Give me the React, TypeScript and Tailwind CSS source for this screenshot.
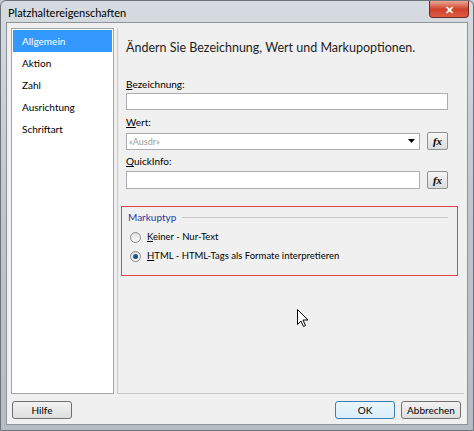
import React from "react";

const ui = { fontFamily: 'Lato, "Noto Sans", Arial, sans-serif' };

const FxButton = () => (
  <div className="w-[21px] h-[18px] ml-[7px] border border-[#8e8f8f] rounded-[2px] bg-gradient-to-b from-[#f6f6f6] to-[#dcdcdc] flex items-center justify-center">
    <span className="text-[11px] font-bold italic leading-none text-black" style={{ fontFamily: '"Liberation Serif", serif' }}>
      fx
    </span>
  </div>
);

const Radio = ({ checked }: { checked?: boolean }) => (
  <div className="w-[11px] h-[11px] rounded-full border border-[#8a8a8a] bg-gradient-to-b from-[#e2e2e2] to-[#f8f8f8] flex items-center justify-center">
    {checked && <div className="w-[5px] h-[5px] rounded-full bg-gradient-to-br from-[#2b6fa8] to-[#0c3c6b]" />}
  </div>
);

function WinButton({ label, primary, className }: { label: string; primary?: boolean; className?: string }) {
  return (
    <div
      className={`h-[18px] w-[60px] rounded-[3px] border ${
        primary ? "border-[#3c7fb1] from-[#eaf6fd] to-[#d9eef9]" : "border-[#707070] from-[#f2f2f2] to-[#dedede]"
      } bg-gradient-to-b flex items-center justify-center text-[10px] text-black ${className || ""}`}
    >
      {label}
    </div>
  );
}

export default function App() {
  const lists = ["Allgemein", "Aktion", "Zahl", "Ausrichtung", "Schriftart"];
  return (
    <div className="w-[474px] h-[431px] overflow-hidden bg-[#c4cad1]" style={ui}>
      <div className="w-[474px] h-[431px] flex flex-col bg-gradient-to-b from-[#d6dbe0] via-[#bfc5cc] to-[#b6bcc4] border border-[#6d747c] rounded-t-[6px]">
        {/* title bar */}
        <div className="h-[21px] flex items-start justify-between shrink-0">
          <span className="text-[11px] text-black pl-[7px] pt-[5px] leading-[14px]">Platzhaltereigenschaften</span>
          <div className="w-[40px] h-[17px] mr-[4px] rounded-b-[4px] border border-[#6b2a22] border-t-0 bg-gradient-to-b from-[#eba595] via-[#cf412b] to-[#dc5a43] flex items-center justify-center">
            <span className="text-white text-[11px] font-bold leading-none">✕</span>
          </div>
        </div>
        {/* client area */}
        <div className="mx-[5px] h-[403px] bg-[#f0f0f0] border border-[#8c939b] flex flex-col">
          <div className="flex pl-[4px] pt-[5px] pr-[3px] h-[372px]">
            <div className="w-[103px] shrink-0 h-[366px] bg-white border border-[#a5a5a5] pt-[1px] px-[1px]">
              {lists.map((l, i) => (
                <div
                  key={l}
                  className={`h-[22px] pl-[9px] text-[10px] leading-[22px] ${i === 0 ? "bg-[#3399ff] text-white" : "text-black"}`}
                >
                  {l}
                </div>
              ))}
            </div>
            <div className="relative ml-[3px] flex-1 min-w-0 h-[366px] border-l border-b border-[#c8c8c8] pl-[8px] pr-[4px]">
              <div className="text-[12.5px] leading-[20px] mt-[10px] text-[#1e1e1e] whitespace-nowrap">
                Ändern Sie Bezeichnung, Wert und Markupoptionen.
              </div>
              <div className="text-[10px] leading-[14px] mt-[19px]">
                <span className="underline">B</span>ezeichnung:
              </div>
              <div className="mt-[2px] h-[17px] w-[322px] bg-white border border-[#abadb3]" />
              <div className="text-[10px] leading-[14px] mt-[5px]">
                <span className="underline">W</span>ert:
              </div>
              <div className="mt-[3px] flex items-center">
                <div className="h-[17px] w-[294px] bg-white border border-[#abadb3] flex items-center justify-between pl-[2px] pr-[4px]">
                  <span className="text-[9px] text-[#9a9a9a] leading-none">«Ausdr»</span>
                  <svg width="7" height="4" viewBox="0 0 7 4">
                    <path d="M0 0 L7 0 L3.5 4 Z" fill="#000" />
                  </svg>
                </div>
                <FxButton />
              </div>
              <div className="text-[10px] leading-[14px] mt-[4px]">
                <span className="underline">Q</span>uickInfo:
              </div>
              <div className="mt-[3px] flex items-center">
                <div className="h-[18px] w-[294px] bg-white border border-[#abadb3]" />
                <FxButton />
              </div>
              <div className="mt-[17px] -ml-[5px] w-[337px] h-[70px] border border-[#e0474c] pl-[6px] pr-[9px] pt-[3px]">
                <div className="flex items-center gap-[6px]">
                  <span className="text-[10px] leading-[14px] text-[#1f3aa0]">Markuptyp</span>
                  <div className="flex-1 h-px bg-[#c8c8c8]" />
                </div>
                <div className="flex items-center gap-[6px] mt-[6px] pl-[2px]">
                  <Radio />
                  <span className="text-[9.5px] leading-[14px]">
                    <span className="underline">K</span>einer - Nur-Text
                  </span>
                </div>
                <div className="flex items-center gap-[6px] mt-[5px] pl-[2px]">
                  <Radio checked />
                  <span className="text-[9.5px] leading-[14px]">
                    <span className="underline">H</span>TML - HTML-Tags als Formate interpretieren
                  </span>
                </div>
              </div>
              {/* mouse pointer */}
              <svg className="absolute left-[179px] top-[281px]" width="12" height="19" viewBox="0 0 12 19">
                <path d="M0.5 0.5 L0.5 15.5 L4 12 L6.5 17.5 L8.5 16.5 L6 11 L11 11 Z" fill="#fff" stroke="#000" strokeWidth="1" />
              </svg>
            </div>
          </div>
          <div className="flex items-center pl-[5px] pr-[6px] mt-[6px]">
            <WinButton label="Hilfe" />
            <div className="flex-1" />
            <WinButton label="OK" primary />
            <WinButton label="Abbrechen" className="ml-[6px]" />
          </div>
        </div>
      </div>
    </div>
  );
}
